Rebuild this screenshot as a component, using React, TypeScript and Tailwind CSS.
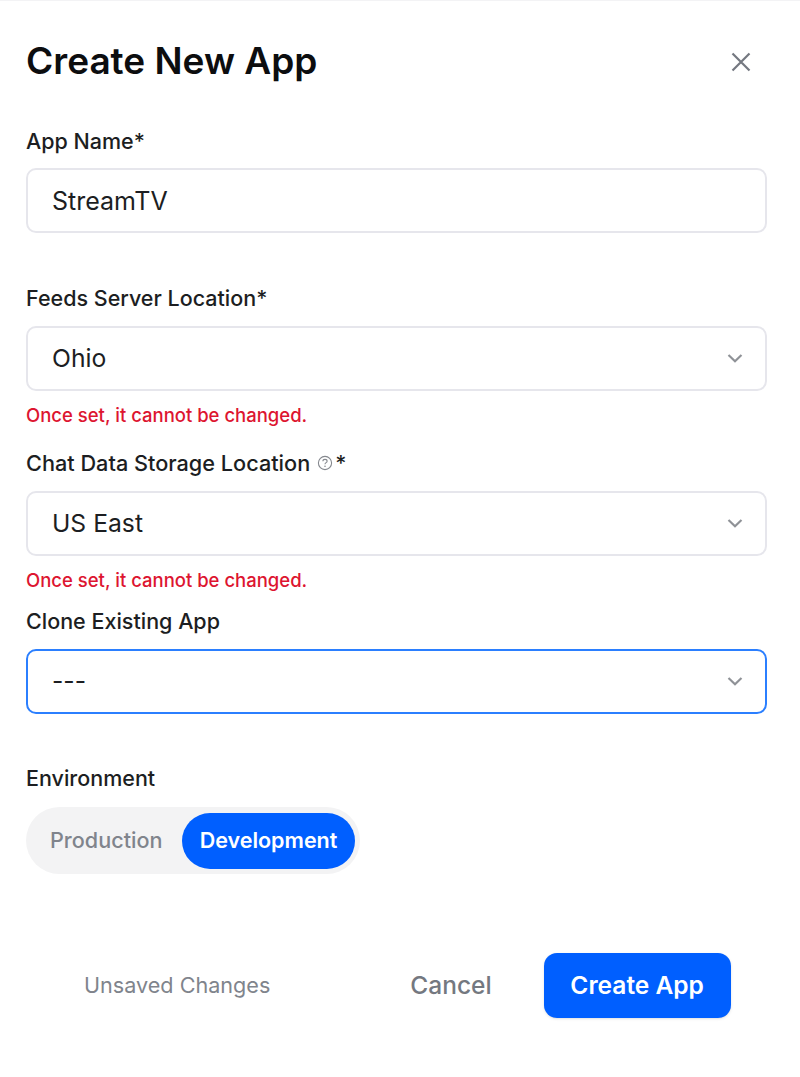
import React from "react";

function Chevron() {
  return (
    <svg width="18" height="18" viewBox="0 0 18 18" fill="none" className="shrink-0 -mt-[1px]">
      <path d="M2.5 6L9 12.2L15.5 6" stroke="#8f9297" strokeWidth="2.2" strokeLinecap="butt" strokeLinejoin="miter" />
    </svg>
  );
}

function Label({ children, className = "" }: { children: React.ReactNode; className?: string }) {
  return (
    <div className={`h-[28px] flex items-center text-[21.5px] leading-[28px] font-medium text-[#1c1e22] ${className}`}>
      {children}
    </div>
  );
}

function Select({ value, focused = false }: { value: string; focused?: boolean }) {
  return (
    <div
      className={`h-[65px] rounded-[10px] border-2 flex items-center justify-between pl-[24px] pr-[21px] text-[24.7px] text-[#1c1e22] ${
        focused ? "border-[#2b7fff]" : "border-[#e6e6ec]"
      }`}
    >
      <span>{value}</span>
      <Chevron />
    </div>
  );
}

function Err() {
  return <div className="h-[28px] mt-[10px] pt-[1px] flex items-center text-[18.5px] font-medium text-[#dd1530]">Once set, it cannot be changed.</div>;
}

export default function App() {
  return (
    <div className="w-[800px] h-[1077px] bg-white border-t border-[#f3f3f5] pl-[26px] pr-[33px] font-['Inter',sans-serif] overflow-hidden flex flex-col">
      <div className="h-[48px] mt-[36px] flex items-center justify-between">
        <h1 className="text-[37px] leading-[48px] font-semibold text-[#0c0d0f]">Create New App</h1>
        <svg width="20" height="20" viewBox="0 0 20 20" fill="none" className="mr-[16px] mt-[2px]">
          <path d="M1.5 1.5L18.5 18.5M18.5 1.5L1.5 18.5" stroke="#747880" strokeWidth="2.2" />
        </svg>
      </div>

      <Label className="mt-[42px]">App Name*</Label>
      <div className="mt-[13px] h-[65px] pt-[2px] rounded-[10px] border-2 border-[#e6e6ec] flex items-center pl-[24px] text-[25px] text-[#1c1e22]">
        StreamTV
      </div>

      <Label className="mt-[51px]">Feeds Server Location*</Label>
      <div className="mt-[14px]">
        <Select value="Ohio" />
      </div>
      <Err />

      <Label className="mt-[20px]">
        <span className="text-[21.7px]">Chat Data Storage Location</span>
        <svg width="16" height="16" viewBox="0 0 16 16" fill="none" className="ml-[7px]">
          <circle cx="8" cy="8" r="6.6" stroke="#85888e" strokeWidth="1.1" />
          <path d="M5.9 6.3C5.9 5.1 6.9 4.4 8 4.4C9.2 4.4 10.1 5.2 10.1 6.2C10.1 7.6 8 7.7 8 9.2" stroke="#85888e" strokeWidth="1.1" />
          <circle cx="8" cy="11.2" r="0.8" fill="#85888e" />
        </svg>
        <span className="ml-[2px]">*</span>
      </Label>
      <div className="mt-[14px]">
        <Select value="US East" />
      </div>
      <Err />

      <Label className="mt-[13px]">Clone Existing App</Label>
      <div className="mt-[14px]">
        <Select value="---" focused />
      </div>

      <Label className="mt-[50px]">Environment</Label>
      <div className="mt-[15px] w-[334px] h-[67px] rounded-full bg-[#f3f3f4] flex items-center justify-between pl-[24px] pr-[5px]">
        <span className="text-[21.6px] font-medium text-[#80848c]">Production</span>
        <span className="w-[173px] h-[56px] rounded-full bg-[#005fff] flex items-center justify-center text-[21.5px] font-semibold text-white">
          Development
        </span>
      </div>

      <div className="mt-[79px] h-[65px] flex items-center pl-[58px]">
        <span className="text-[21.6px] text-[#80848c]">Unsaved Changes</span>
        <span className="ml-[140px] text-[24.5px] font-medium text-[#747880]">Cancel</span>
        <button className="ml-[52px] w-[187px] h-[65px] rounded-[13px] bg-[#005fff] shadow-sm text-[24.5px] font-semibold text-white">
          Create App
        </button>
      </div>
    </div>
  );
}
